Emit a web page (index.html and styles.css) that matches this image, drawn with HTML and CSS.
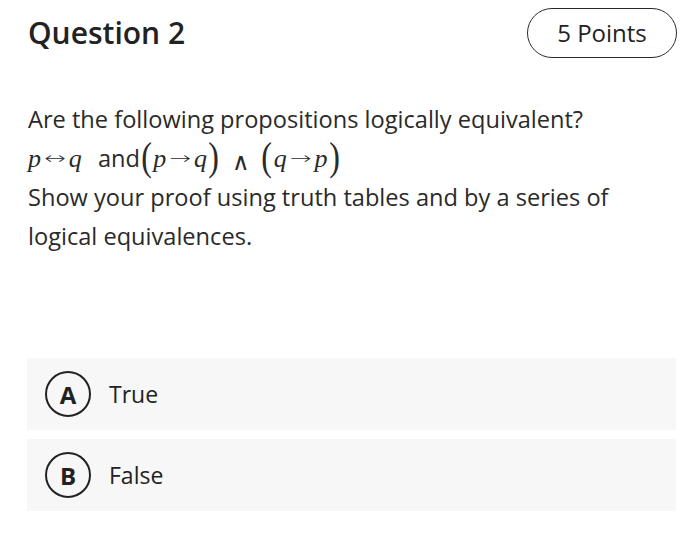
FILE: index.html
```html
<!DOCTYPE html>
<html>
<head>
<meta charset="utf-8">
<link rel="stylesheet" href="styles.css">
</head>
<body>
<div class="page">
  <header class="head">
    <h1 class="title">Question 2</h1>
    <div class="points">5 Points</div>
  </header>
  <div class="question">
    <p class="line">Are the following propositions logically equivalent?</p>
    <p class="line math-line"><span class="v">p</span><span class="op">↔</span><span class="v">q</span> <span class="txt">and</span><span class="paren">(</span><span class="v">p</span><span class="op">→</span><span class="v">q</span><span class="paren">)</span><span class="op wedge">∧</span><span class="paren">(</span><span class="v">q</span><span class="op">→</span><span class="v">p</span><span class="paren">)</span></p>
    <p class="line">Show your proof using truth tables and by a series of<br>logical equivalences.</p>
  </div>
  <div class="options">
    <div class="option"><span class="badge">A</span><span class="label">True</span></div>
    <div class="option"><span class="badge">B</span><span class="label">False</span></div>
  </div>
</div>
</body>
</html>
```
FILE: styles.css
```css
html, body {
  margin: 0;
  padding: 0;
  background: #ffffff;
}
body {
  font-family: "Open Sans", "Liberation Sans", sans-serif;
  color: #262626;
}
.page {
  padding: 8px 23px 0 27px;
}
.head {
  display: flex;
  align-items: center;
  justify-content: space-between;
  height: 50px;
}
.title {
  margin: 0 0 0 1px;
  font-size: 30px;
  font-weight: 600;
  color: #222;
  line-height: 1;
}
.points {
  box-sizing: border-box;
  width: 150px;
  height: 50px;
  border: 1.6px solid #2a2a2a;
  border-radius: 25px;
  display: flex;
  align-items: center;
  justify-content: center;
  font-size: 24px;
  font-weight: 500;
  color: #222;
  padding-bottom: 1px;
}
.question {
  margin-top: 42px;
  padding-left: 1px;
}
.line {
  margin: 0;
  font-size: 23.6px;
  line-height: 39px;
  color: #2a2a2a;
}
.math-line {
  white-space: nowrap;
}
.math-line span {
  line-height: 0;
}
.v {
  font-family: "Liberation Serif", "DejaVu Serif", serif;
  font-style: italic;
  font-size: 26px;
}
.op {
  display: inline-block;
  font-family: "DejaVu Sans", sans-serif;
  font-size: 26px;
  font-weight: 300;
  margin: 0 3px;
  position: relative;
  top: 0px;
  transform: scaleY(0.65);
}
.wedge {
  margin: 0 10px 0 12px;
  font-size: 24px;
  transform: none;
  top: 3px;
}
.txt {
  margin-left: 10px;
}
.paren {
  display: inline-block;
  font-family: "Liberation Serif", "DejaVu Serif", serif;
  font-size: 40px;
  margin: 0 0px;
  position: relative;
  top: 3px;
  transform: scaleX(0.8);
}
.options {
  margin-top: 102px;
  display: flex;
  flex-direction: column;
  gap: 9px;
}
.option {
  width: 649px;
  height: 72px;
  background: #f7f7f7;
  display: flex;
  align-items: center;
  padding-left: 18px;
  box-sizing: border-box;
  gap: 18px;
}
.badge {
  box-sizing: border-box;
  width: 46px;
  height: 46px;
  border: 2.5px solid #222;
  border-radius: 50%;
  display: flex;
  align-items: center;
  justify-content: center;
  font-size: 24px;
  font-weight: 700;
  color: #222;
}
.label {
  font-size: 23px;
  font-weight: 500;
  color: #222;
}
```
